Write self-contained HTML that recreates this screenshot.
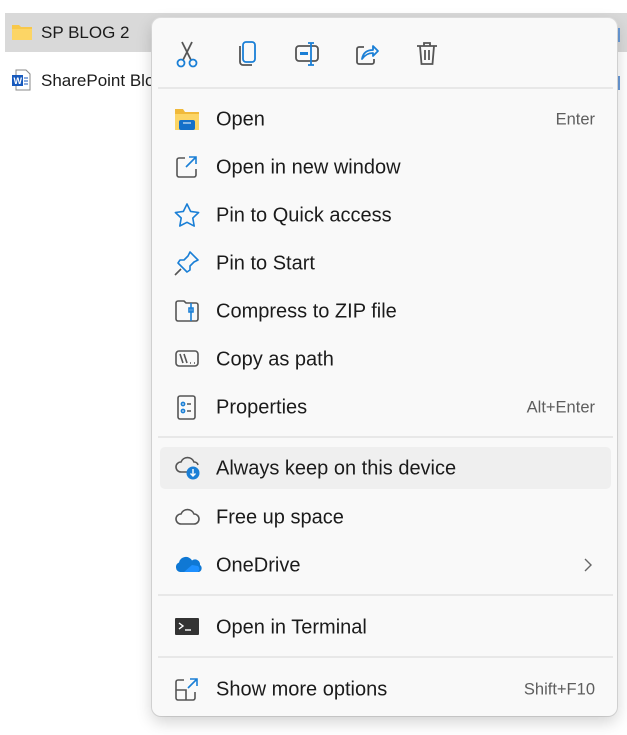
<!DOCTYPE html>
<html><head><meta charset="utf-8"><style>
body{margin:0;width:627px;height:735px;background:#fff;position:relative;overflow:hidden;font-family:"Segoe UI","Liberation Sans",sans-serif;color:#1b1b1b}
.band{position:absolute;left:5px;top:13px;width:622px;height:39px;background:#d9d9d9}
.t{position:absolute;font-size:17px}
.menu{position:absolute;left:152px;top:18px;width:465px;height:698px;background:#f9f9f9;border-radius:9px;box-shadow:0 6px 16px rgba(0,0,0,.18),0 0 0 1px #e3e3e3}
.sep{position:absolute;left:6px;right:4px;height:2px;background:#e8e8e8}
.row{position:absolute;left:0;right:0;height:42px}
.row .l{position:absolute;left:64px;top:50%;transform:translateY(-46%);font-size:20px;color:#1b1b1b;white-space:nowrap}
.row .k{position:absolute;right:22px;top:50%;transform:translateY(-44%);font-size:16.5px;color:#5e5e5e}
.row svg{position:absolute;left:22px;top:9px}
.tb{position:absolute;top:22px}
</style></head><body>
<div class="band"></div>
<svg style="position:absolute;left:11px;top:23px" width="22" height="18"><path d="M1 2h7l2 2h11v13H1z" fill="#f8c84a"/><path d="M1 6h20v11H1z" fill="#fcd565"/></svg>
<div class="t" style="left:41px;top:23px">SP BLOG 2</div>
<svg style="position:absolute;left:11px;top:69px" width="20" height="22"><path d="M5 1h10l4 4v16H5z" fill="#fff" stroke="#888"/><rect x="1" y="6" width="11" height="11" fill="#185abd"/><text x="2.5" y="15" font-size="9" fill="#fff" font-family="Liberation Sans" font-weight="bold">W</text><path d="M13 9h4M13 12h4M13 15h4" stroke="#185abd"/></svg>
<div class="t" style="left:41px;top:71px">SharePoint Blo</div>
<div style="position:absolute;left:618px;top:28px;width:2px;height:14px;background:#6a9bd8"></div>
<div style="position:absolute;left:618px;top:76px;width:2px;height:14px;background:#6a9bd8"></div>
<div class="menu">
<svg class="tb" style="left:22px" width="26" height="28" fill="none" stroke-width="1.8"><path d="M8 2l9 18M18 2l-9 18" stroke="#555"/><circle cx="7" cy="23" r="3.5" stroke="#1a7fd6"/><circle cx="19" cy="23" r="3.5" stroke="#1a7fd6"/></svg>
<svg class="tb" style="left:84px" width="24" height="28" fill="none" stroke-width="1.8"><path d="M4 6v16a3 3 0 003 3h9" stroke="#555"/><rect x="7" y="2" width="12" height="20" rx="3" stroke="#1a7fd6"/></svg>
<svg class="tb" style="left:142px" width="28" height="28" fill="none" stroke-width="1.8"><rect x="2" y="6" width="22" height="15" rx="3" stroke="#555"/><path d="M6 13.5h8" stroke="#1a7fd6" stroke-width="3"/><path d="M17 3v22M14 3h6M14 25h6" stroke="#1a7fd6"/></svg>
<svg class="tb" style="left:202px" width="26" height="28" fill="none" stroke-width="1.8"><path d="M10 7H5a2 2 0 00-2 2v13a2 2 0 002 2h13a2 2 0 002-2v-3" stroke="#555"/><path d="M8 19c1-6 5-9 11-9V6l5 5-5 5v-3c-5 0-8 2-11 6z" stroke="#1a7fd6" stroke-linejoin="round"/></svg>
<svg class="tb" style="left:263px" width="24" height="28" fill="none" stroke-width="1.8" stroke="#555"><path d="M2 6h20M9 6V3h6v3M5 6l1.5 18h11L19 6M10 10v10M14 10v10"/></svg>
<div class="sep" style="top:69px"></div>
<div class="row" style="top:80px"><svg width="26" height="24"><path d="M1 2h8l2 3h14v18H1z" fill="#f0b93a"/><path d="M1 7h24v16H1z" fill="#fcd565"/><rect x="5" y="13" width="16" height="10" rx="2" fill="#1570c9"/><path d="M9 16h8" stroke="#fff"/></svg><span class="l">Open</span><span class="k">Enter</span></div>
<div class="row" style="top:128px"><svg width="26" height="24" fill="none" stroke-width="1.6"><path d="M11 3H5a2 2 0 00-2 2v15a2 2 0 002 2h15a2 2 0 002-2v-6" stroke="#555"/><path d="M15 2h7v7M22 2l-10 10" stroke="#1a7fd6"/></svg><span class="l">Open in new window</span></div>
<div class="row" style="top:176px"><svg width="26" height="24" fill="none" stroke="#1a7fd6" stroke-width="1.6"><path d="M13 1l3.6 7.4 8 1.1-5.8 5.6 1.4 8L13 19.3 5.8 23l1.4-8L1.4 9.5l8-1.1z" stroke-linejoin="round"/></svg><span class="l">Pin to Quick access</span></div>
<div class="row" style="top:224px"><svg width="26" height="26" fill="none" stroke-width="1.6"><path d="M16 1l8 8-4 2-4 4 0 4-3 2-9-9 2-3h4l4-4z" stroke="#1a7fd6" stroke-linejoin="round"/><path d="M7 18l-6 6" stroke="#555"/></svg><span class="l">Pin to Start</span></div>
<div class="row" style="top:272px"><svg width="26" height="24" fill="none" stroke-width="1.6"><path d="M2 4a2 2 0 012-2h6l2 2h10a2 2 0 012 2v14a2 2 0 01-2 2H4a2 2 0 01-2-2z" stroke="#555"/><path d="M17 4v18M15 9h4v4h-4z" stroke="#1a7fd6"/></svg><span class="l">Compress to ZIP file</span></div>
<div class="row" style="top:320px"><svg width="26" height="24" fill="none" stroke="#555" stroke-width="1.6"><rect x="2" y="4" width="22" height="15" rx="3"/><path d="M6 7l3 9M10 7l3 9"/><path d="M16 16h1M20 16h1"/></svg><span class="l">Copy as path</span></div>
<div class="row" style="top:368px"><svg width="26" height="26" fill="none" stroke-width="1.6"><rect x="4" y="1" width="17" height="23" rx="2" stroke="#555"/><circle cx="9" cy="9" r="1.6" stroke="#1a7fd6"/><circle cx="9" cy="16" r="1.6" stroke="#1a7fd6"/><path d="M13 9h4M13 16h4" stroke="#555"/></svg><span class="l">Properties</span><span class="k">Alt+Enter</span></div>
<div class="sep" style="top:418px"></div>
<div class="row" style="top:429px;left:8px;right:6px;background:#efefef;border-radius:5px;height:42px"><svg style="left:14px" width="28" height="26" fill="none" stroke-width="1.6"><path d="M14 16H7a5 5 0 010-10 7 7 0 0113 0 4 4 0 014 3" stroke="#555"/><circle cx="19" cy="17" r="6.5" fill="#1a7fd6"/><path d="M19 13v7M16.5 17.5l2.5 2.5 2.5-2.5" stroke="#fff" stroke-width="1.4"/></svg><span class="l" style="left:56px">Always keep on this device</span></div>
<div class="row" style="top:478px"><svg width="28" height="24" fill="none" stroke="#555" stroke-width="1.6"><path d="M7 19a5 5 0 010-10 7 7 0 0113 0 5 5 0 010 10z"/></svg><span class="l">Free up space</span></div>
<div class="row" style="top:526px"><svg width="28" height="24"><path d="M6 19a5 5 0 01-1-9.5 7 7 0 0113-2 5 5 0 018 4.5 4 4 0 01-1 7z" fill="#0f78d4"/><path d="M10 19l8-7 6 1a4 4 0 010 6z" fill="#1e90ff"/></svg><span class="l">OneDrive</span><svg style="left:auto;right:24px;top:13px" width="10" height="16" fill="none" stroke="#666" stroke-width="1.4"><path d="M2 2l6 6-6 6"/></svg></div>
<div class="sep" style="top:576px"></div>
<div class="row" style="top:588px"><svg width="26" height="24"><rect x="1" y="3" width="24" height="17" rx="1" fill="#333"/><path d="M5 8l4 3-4 3" stroke="#fff" stroke-width="1.4" fill="none"/><path d="M11 15h6" stroke="#fff" stroke-width="1.4"/></svg><span class="l">Open in Terminal</span></div>
<div class="sep" style="top:638px"></div>
<div class="row" style="top:650px"><svg width="26" height="26" fill="none" stroke-width="1.6"><path d="M10 3H4a2 2 0 00-2 2v16a2 2 0 002 2h15a2 2 0 002-2v-6M2 13h10v10" stroke="#555"/><path d="M16 2h7v7M23 2l-9 9" stroke="#1a7fd6"/></svg><span class="l">Show more options</span><span class="k">Shift+F10</span></div>
</div>
</body></html>
